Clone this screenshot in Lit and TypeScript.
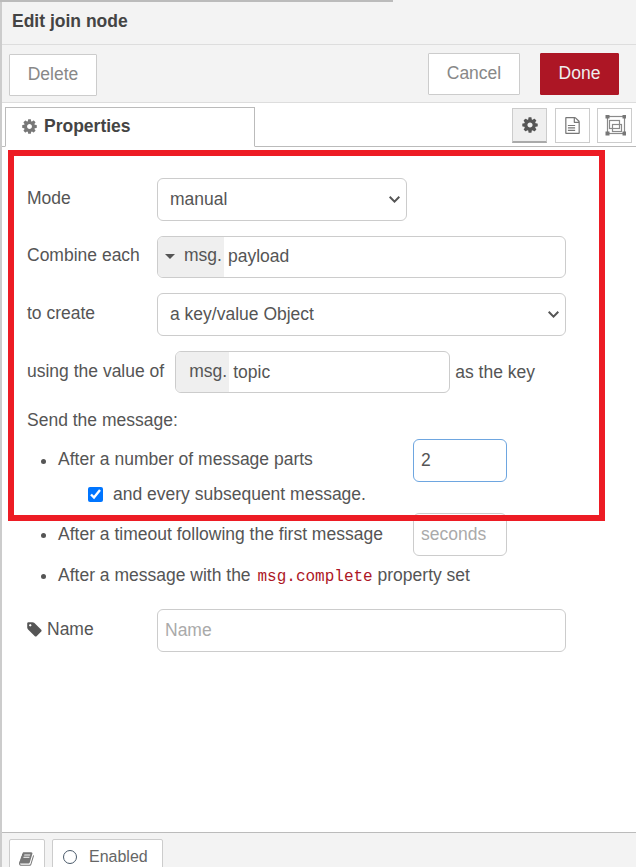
import { LitElement, html, css, svg } from "lit";
import { customElement } from "lit/decorators.js";

const COG = "M1152 896q0-106-75-181t-181-75-181 75-75 181 75 181 181 75 181-75 75-181zm512-109v222q0 12-8 23t-20 13l-185 28q-19 54-39 91 35 50 107 138 10 12 10 25t-9 23q-27 37-99 108t-94 71q-12 0-26-9l-138-108q-44 23-91 38-16 136-29 186-7 28-36 28h-222q-14 0-24.500-8.500t-11.500-21.500l-28-184q-49-16-90-37l-141 107q-10 9-25 9-14 0-25-11-126-114-165-168-7-10-7-23 0-12 8-23 15-21 51-66.500t54-70.500q-27-50-41-99l-183-27q-13-2-21-12.500t-8-23.500v-222q0-12 8-23t19-13l186-28q14-46 39-92-40-57-107-138-10-12-10-24 0-10 9-23 26-36 98.500-107.500t94.500-71.500q13 0 26 10l138 107q44-23 91-38 16-136 29-186 7-28 36-28h222q14 0 24.500 8.500t11.500 21.500l28 184q49 16 90 37l142-107q9-9 24-9 13 0 25 10 129 119 165 170 7 8 7 22 0 12-8 23-15 21-51 66.500t-54 70.500q26 50 41 98l183 28q13 2 21 12.500t8 23.500z";
const TAG = "M576 448q0-53-37.500-90.500t-90.500-37.500-90.500 37.500-37.500 90.500 37.500 90.500 90.500 37.500 90.500-37.500 37.500-90.500zm1067 576q0 53-37 90l-491 492q-39 37-91 37-53 0-90-37l-715-716q-38-37-64.500-101t-26.500-117v-416q0-52 38-90t90-38h416q53 0 117 26.500t102 64.500l715 714q37 39 37 91z";
const BOOK = "M1639 478q40 57 18 129l-275 906q-19 64-76.500 107.500t-122.500 43.500h-923q-77 0-148.500-53.500t-99.500-131.500q-24-67-2-127 0-4 3-27t4-37q1-8-3-21.500t-3-19.500q2-11 8-21t16.500-23.500 16.500-23.500q23-38 45-91.500t30-91.500q3-10 .5-30t-.5-28q3-11 17-28t17-23q21-36 42-92t25-90q1-9-2.500-32t.5-28q4-13 22-30.500t22-22.500q19-26 42.500-84.500t27.500-96.500q1-8-3-25.500t-2-26.500q2-8 9-18t18-23 17-21q8-12 16.500-30.500t15-35 16-36 19.500-32 26.500-23.500 36-11.500 47.500 5.500l-1 3q38-9 51-9h761q74 0 114 56t18 130l-274 906q-36 119-71.500 153.500t-128.500 34.500h-869q-27 0-38 15-11 16-1 43 24 70 144 70h923q29 0 56-15.500t35-41.500l300-987q7-22 5-57 38 15 59 43zm-1064 2q-4 13 2 22.500t20 9.500h608q13 0 25.500-9.500t16.500-22.500l21-64q4-13-2-22.500t-20-9.500h-608q-13 0-25.500 9.500t-16.500 22.500zm-83 256q-4 13 2 22.500t20 9.500h608q13 0 25.500-9.500t16.500-22.500l21-64q4-13-2-22.500t-20-9.500h-608q-13 0-25.500 9.500t-16.500 22.500z";
const FILE = "M1596 380q28 28 48 76t20 88v1152q0 40-28 68t-68 28h-1344q-40 0-68-28t-28-68v-1600q0-40 28-68t68-28h896q40 0 88 20t76 48zm-444-244v376h376q-10-29-22-41l-313-313q-12-12-41-22zm384 1528v-1024h-416q-40 0-68-28t-28-68v-416h-768v1536h1280zm-1128-800q0-14 9-23t23-9h704q14 0 23 9t9 23v64q0 14-9 23t-23 9h-704q-14 0-23-9t-9-23v-64zm736 224q14 0 23 9t9 23v64q0 14-9 23t-23 9h-704q-14 0-23-9t-9-23v-64q0-14 9-23t23-9h704zm0 256q14 0 23 9t9 23v64q0 14-9 23t-23 9h-704q-14 0-23-9t-9-23v-64q0-14 9-23t23-9h704z";

const fa = (d: string, size: number) => html`<svg width=${size} height=${size} viewBox="0 0 1792 1792" fill="currentColor">${svg`<path d=${d}></path>`}</svg>`;
const chevron = html`<svg class="chev" width="11" height="7" viewBox="0 0 11 7" fill="none" stroke="#555" stroke-width="2"><path d="M.7.8l4.800 4.800L10.300.8"></path></svg>`;

@customElement("app-root")
export class AppRoot extends LitElement {
  static styles = css`
    :host { display: block; width: 636px; height: 867px; position: relative; overflow: hidden; background: #fff; font-family: "Liberation Sans", Arial, sans-serif; font-size: 17.5px; color: #555; }
    * { box-sizing: border-box; }
    .shell { height: 867px; display: flex; flex-direction: column; border-left: 2px solid #ccc; }
    .topline { position: absolute; left: 0; top: 0; width: 393px; height: 2px; background: #bbb; }
    .title { height: 45px; padding: 0 0 2px 10px; background: #f3f3f3; border-bottom: 1px solid #ddd; display: flex; align-items: center; font-weight: bold; font-size: 17.5px; color: #444; flex: none; }
    .actions { height: 58px; background: #f3f3f3; border-bottom: 1px solid #ddd; display: flex; align-items: flex-start; padding: 8px 17px 0 7px; flex: none; }
    .btn { height: 42px; padding-bottom: 2px; display: flex; align-items: center; justify-content: center; background: #fff; border: 1px solid #ccc; border-radius: 1px; color: #888; }
    .delete { width: 88px; margin-top: 1px; }
    .cancel { width: 92px; margin-left: auto; }
    .done { width: 79px; margin-left: 20px; background: #ad1625; border-color: #ad1625; color: #eee; }
    .tabs { height: 44px; flex: none; display: flex; align-items: flex-end; border-bottom: 1px solid #bbb; padding: 0 4px 0 3px; position: relative; }
    .tab { width: 250px; height: 40px; margin-bottom: -1px; padding-bottom: 2px; background: #fff; border: 1px solid #bbb; border-bottom: 1px solid #fff; display: flex; align-items: center; padding-left: 15px; gap: 6px; font-weight: bold; font-size: 17.5px; color: #444; }
    .tab svg { color: #777; }
    .tools { margin-left: auto; display: flex; gap: 7.5px; margin-bottom: 3px; }
    .tool { width: 35px; height: 35px; border: 1px solid #ccc; background: #fff; display: flex; align-items: center; justify-content: center; color: #777; }
    .tool.on { background: #efefef; border-bottom: 2px solid #aaa; color: #555; }
    .form { flex: 1; padding: 31px 0 0 25px; display: flex; flex-direction: column; }
    .row { height: 42.6px; display: flex; align-items: center; margin-bottom: 15px; }
    .row > label { width: 130px; flex: none; position: relative; top: -1px; }
    input, select { font: inherit; color: #555; height: 100%; border: 1px solid #ccc; border-radius: 6px; background: #fff; outline: none; }
    .sel { position: relative; height: 100%; }
    .sel select { appearance: none; width: 100%; padding: 0 12px; }
    .chev { position: absolute; right: 7px; top: 18px; pointer-events: none; }
    input[type="text"] { padding: 0 7px; }
    input::placeholder { color: #aaa; opacity: 1; }
    .w250 { width: 250px; }
    .w409 { width: 409px; }
    .typed { height: 100%; display: flex; border: 1px solid #ccc; border-radius: 6px; overflow: hidden; align-items: stretch; }
    .prefix { background: #efefef; display: flex; align-items: center; gap: 9px; flex: none; }
    .prefix span.m { position: relative; top: -1px; }
    .caret { width: 0; height: 0; border-left: 5px solid transparent; border-right: 5px solid transparent; border-top: 5px solid #555; }
    .typed input[type="text"] { border: 0; border-radius: 0; flex: 1; min-width: 0; padding: 0 4px; background: transparent; }
    .p1 { padding: 0 0 0 7px; width: 66px; }
    .p2 { padding: 0 0 0 13px; width: 53px; }
    .inline label { width: auto; margin-right: 11px; }
    .inline .typed { width: 275px; }
    .inline span.after { margin-left: 5px; }
    .send { margin: 2px 0 0; height: 28.6px; line-height: 20px; }
    ul { margin: 0; padding: 0 0 0 31px; }
    li { color: #555; }
    .li { display: flex; align-items: center; }
    .li .text { width: 355px; flex: none; position: relative; top: -1px; }
    .li input { width: 94px; height: 42.6px; }
    .li .low { top: 0; }
    .focus { border-color: #6ea6e0 !important; }
    .check { display: flex; align-items: center; height: 31px; padding-left: 30px; margin: -3px 0 3.4px; }
    .check input { width: 15px; height: 15px; margin: 0 10px 0 0; }
    .third { margin-top: 7.6px; line-height: 24px; }
    code { font-family: "Liberation Mono", monospace; font-size: 16px; color: #ad1625; margin-left: 2px; }
    .namerow { margin-top: 20px; margin-bottom: 0; }
    .namerow > label { display: flex; align-items: center; gap: 4px; margin-left: -1px; width: 131px; }
    .footer { height: 35px; flex: none; border-top: 1px solid #bbb; background: #f3f3f3; display: flex; padding: 6px 0 0 7px; gap: 7px; }
    .fbtn { height: 40px; background: #fff; border: 1px solid #ccc; border-radius: 2px 2px 0 0; display: flex; align-items: center; color: #777; }
    .book { width: 36px; justify-content: center; }
    .enabled { width: 111px; padding-left: 10px; gap: 12px; color: #666; align-items: flex-start; padding-top: 8px; line-height: 18px; font-size: 16px; }
    .ring { width: 14px; height: 14px; border: 1.5px solid #4a5a6a; border-radius: 50%; margin-top: 2px; }
    .hl { position: absolute; left: 8px; top: 150px; width: 597px; height: 371px; border: 6px solid #ed1c24; pointer-events: none; }
  `;

  render() {
    return html`
      <div class="topline"></div>
      <div class="shell">
        <div class="title">Edit join node</div>
        <div class="actions">
          <div class="btn delete">Delete</div>
          <div class="btn cancel">Cancel</div>
          <div class="btn done">Done</div>
        </div>
        <div class="tabs">
          <div class="tab">${fa(COG, 17)}Properties</div>
          <div class="tools">
            <div class="tool on">${fa(COG, 18)}</div>
            <div class="tool">${fa(FILE, 17)}</div>
            <div class="tool">
              <svg width="22" height="22" viewBox="-1 1 22 22" fill="none" stroke="#8a8a8a" stroke-width="1.2">
                <rect x="2.500" y="2.500" width="17" height="17"></rect>
                <rect x="4.500" y="6.500" width="10" height="8"></rect>
                <rect x="7.500" y="10.500" width="9" height="7"></rect>
                <g fill="#777" stroke="none"><rect x="0.500" y="0.500" width="4" height="4"></rect><rect x="17.500" y="0.500" width="4" height="4"></rect><rect x="0.500" y="17.500" width="4" height="4"></rect><rect x="17.500" y="17.500" width="4" height="4"></rect></g>
              </svg>
            </div>
          </div>
        </div>
        <div class="form">
          <div class="row"><label>Mode</label><div class="sel w250"><select><option>manual</option></select>${chevron}</div></div>
          <div class="row"><label>Combine each</label>
            <div class="typed w409"><div class="prefix p1"><span class="caret"></span><span class="m">msg.</span></div><input type="text" .value=${"payload"} /></div>
          </div>
          <div class="row"><label>to create</label><div class="sel w409"><select><option>a key/value Object</option></select>${chevron}</div></div>
          <div class="row inline"><label>using the value of</label>
            <div class="typed"><div class="prefix p2"><span class="m">msg.</span></div><input type="text" .value=${"topic"} /></div>
            <span class="after">as the key</span>
          </div>
          <div class="send">Send the message:</div>
          <ul>
            <li><div class="li"><span class="text">After a number of message parts</span><input type="text" class="focus" .value=${"2"} /></div>
              <label class="check"><input type="checkbox" checked />and every subsequent message.</label></li>
            <li><div class="li"><span class="text low">After a timeout following the first message</span><input type="text" placeholder="seconds" /></div></li>
            <li class="third">After a message with the <code>msg.complete</code> property set</li>
          </ul>
          <div class="row namerow"><label>${fa(TAG, 17)}Name</label><input type="text" class="w409" placeholder="Name" /></div>
        </div>
        <div class="footer">
          <div class="fbtn book">${fa(BOOK, 16)}</div>
          <div class="fbtn enabled"><span class="ring"></span>Enabled</div>
        </div>
      </div>
      <div class="hl"></div>
    `;
  }
}
